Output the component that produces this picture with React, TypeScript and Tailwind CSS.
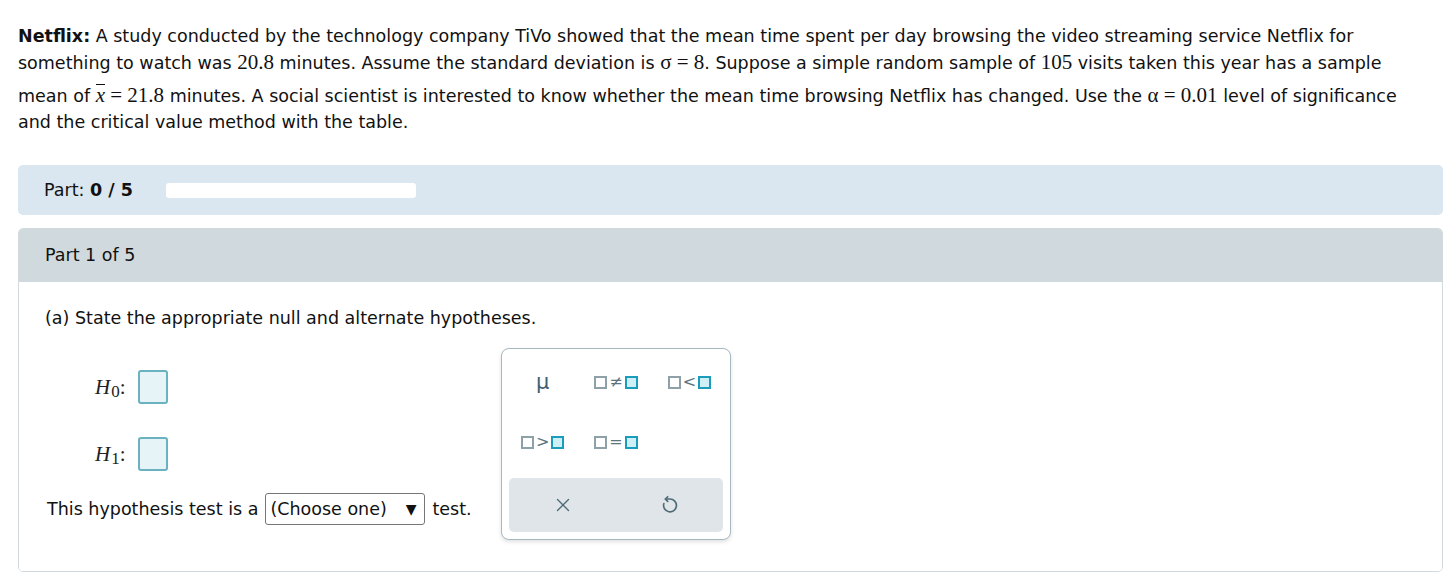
import { X } from "lucide-react";

const sans = "font-['Verdana','DejaVu_Sans',sans-serif]";
const serif = "font-['Liberation_Serif','Times_New_Roman',serif]";

function M({ children }: { children: React.ReactNode }) {
    return <span className={`${serif} text-[21px]`}>{children}</span>;
}

function Sq({ on }: { on?: boolean }) {
    return on ? (
        <span className="inline-block w-[13px] h-[13px] border-2 border-[#1b9cbb] bg-[#cdeff5]" />
    ) : (
        <span className="inline-block w-[13px] h-[13px] border-2 border-[#8fa1a8] bg-white" />
    );
}

function Op({ sym }: { sym: string }) {
    return (
        <span className="flex items-center gap-[1px] text-[#5b7580] text-[16px] leading-none">
            <Sq />
            <span className="px-[1px]">{sym}</span>
            <Sq on />
        </span>
    );
}

function Hyp({ sub }: { sub: string }) {
    return (
        <div className="flex items-center gap-[12px]">
            <span className={`${serif} italic text-[21px] text-[#222]`}>
                H<sub className="not-italic text-[17px] relative top-[3px] ml-[1px]">{sub}</sub>
                <span className="not-italic">:</span>
            </span>
            <span className="w-[30px] h-[34px] rounded-[3px] border-2 border-[#6ab2c0] bg-[#e6f4f8]" />
        </div>
    );
}

function Undo() {
    return (
        <svg viewBox="0 0 24 24" className="w-[22px] h-[22px]" fill="none" stroke="#4f6b77" strokeWidth={1.8} strokeLinecap="round" strokeLinejoin="round">
            <path d="M9.5 3 L7 5.5 L9.5 8" />
            <path d="M7 5.5 H12 A7 7 0 1 1 5.3 10.5" />
        </svg>
    );
}

export default function App() {
    return (
        <div className={`${sans} text-[17.5px] text-[#111] bg-white w-[1456px] h-[588px] pl-[18px] pr-[13px] pt-[23px]`}>
            <p className="leading-[26px] max-w-[1412px]">
                <b>Netflix:</b> A study conducted by the technology company TiVo showed that the mean time spent per day browsing the video streaming service Netflix for something to watch was <M>20.8</M> minutes. Assume the standard deviation is <M>σ = 8</M>. Suppose a simple random sample of <M>105</M> visits taken this year has a sample mean of{" "}
                <M>
                    <span className="inline-block border-t border-[#111] leading-[20px] mt-[8px] italic">x</span> = 21.8
                </M>{" "}
                minutes. A social scientist is interested to know whether the mean time browsing Netflix has changed. Use the <M>α = 0.01</M> level of significance and the critical value method with the table.
            </p>

            {/* progress */}
            <div className="mt-[30px] h-[50px] rounded-[5px] bg-[#dae6f0] flex items-center pl-[26px] gap-[33px]">
                <span>
                    Part: <b>0 / 5</b>
                </span>
                <span className="w-[250px] h-[15px] rounded-[3px] bg-white" />
            </div>

            {/* part panel */}
            <div className="mt-[13px] rounded-[5px] border border-[#d2dadd] overflow-hidden">
                <div className="h-[53px] bg-[#d0d9dd] flex items-center pl-[26px]">Part 1 of 5</div>
                <div className="bg-white h-[289px] pl-[26px] pt-[23px]">
                    <div>(a) State the appropriate null and alternate hypotheses.</div>
                    <div className="flex">
                        <div className="w-[456px]">
                            <div className="pl-[50px] pt-[39px] flex flex-col gap-[33px]">
                                <Hyp sub="0" />
                                <Hyp sub="1" />
                            </div>
                            <div className="mt-[22px] ml-[2px] flex items-center gap-[7px]">
                                <span>This hypothesis test is a</span>
                                <span className="h-[32px] w-[160px] border border-[#767676] rounded-[3px] flex items-center justify-between pl-[4px] pr-[8px]">
                                    <span>(Choose one)</span>
                                    <span className="text-[14px]">▼</span>
                                </span>
                                <span>test.</span>
                            </div>
                        </div>
                        <div className="mt-[17px] w-[230px] h-[192px] rounded-[8px] border border-[#a6b8c0] shadow-[0_2px_4px_rgba(0,0,0,0.12)] bg-white flex flex-col">
                            <div className="grid grid-cols-3 h-[62px] items-center justify-items-center pt-[4px] px-[4px]">
                                <span className="text-[#3f6170] text-[21px] leading-none">μ</span>
                                <Op sym="≠" />
                                <Op sym="<" />
                            </div>
                            <div className="grid grid-cols-3 h-[62px] items-center justify-items-center px-[4px]">
                                <Op sym=">" />
                                <Op sym="=" />
                                <span />
                            </div>
                            <div className="mx-[7px] mt-[5px] h-[54px] rounded-[5px] bg-[#dfe5e8] grid grid-cols-2 items-center justify-items-center">
                                <X className="w-[22px] h-[22px] text-[#4f6b77]" strokeWidth={1.5} />
                                <Undo />
                            </div>
                        </div>
                    </div>
                </div>
            </div>
        </div>
    );
}
